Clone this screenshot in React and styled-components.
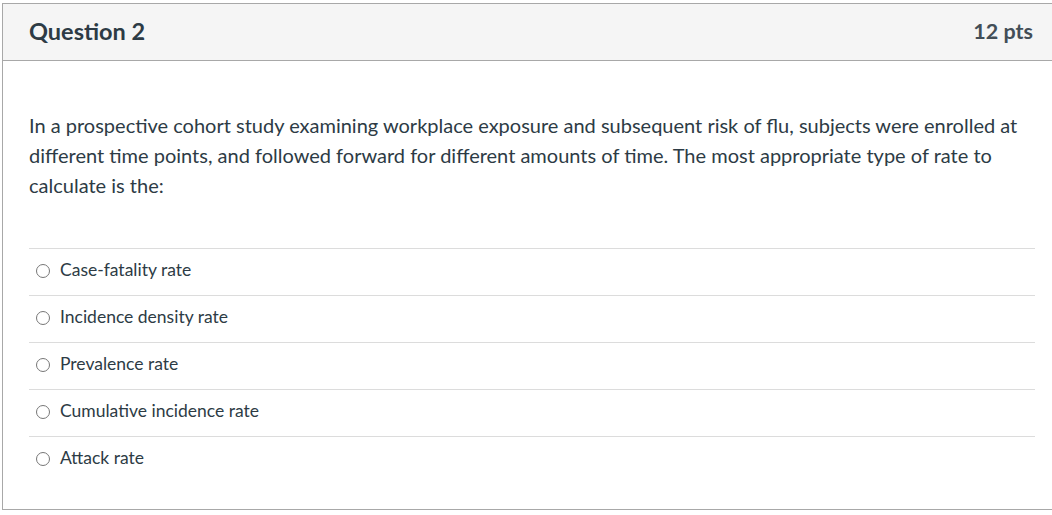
import React from 'react';
import styled, { createGlobalStyle } from 'styled-components';

const GlobalStyle = createGlobalStyle`
  html, body {
    margin: 0;
    padding: 0;
    background: #fff;
    overflow: hidden;
  }
  body {
    font-family: Lato, "Open Sans", sans-serif;
    color: #2d3b45;
  }
`;

const Page = styled.div`
  padding: 3px 0 0 2px;
`;

const QuestionBox = styled.div`
  width: 1052px;
  box-sizing: border-box;
  border: 1px solid #a8a8a8;
  background: #fff;
`;

const Header = styled.div`
  height: 56px;
  box-sizing: content-box;
  display: flex;
  align-items: center;
  justify-content: space-between;
  padding: 0 20px 0 26px;
  background: #f5f5f5;
  border-bottom: 1px solid #a8a8a8;
`;

const Title = styled.h2`
  margin: 0 0 2px;
  font-size: 23.5px;
  font-weight: 700;
  color: #2d3b45;
`;

const Points = styled.span`
  margin-bottom: 2px;
  font-size: 21.5px;
  font-weight: 700;
  color: #434e57;
`;

const Body = styled.div`
  padding: 49px 18px 26px 26px;
`;

const Prompt = styled.p`
  margin: 0 0 48px;
  font-size: 20px;
  line-height: 30px;
`;

const Answers = styled.div`
  display: flex;
  flex-direction: column;
`;

const Answer = styled.label`
  display: flex;
  align-items: center;
  gap: 10px;
  height: 47px;
  padding: 0 0 6px 7px;
  box-sizing: border-box;
  border-top: 1px solid #dcdcdc;
  font-size: 17.5px;
`;

const Radio = styled.span`
  width: 14px;
  height: 14px;
  margin-top: 4px;
  box-sizing: border-box;
  border: 1px solid #777;
  border-radius: 50%;
  background: #fff;
  flex: none;
`;

const answers = [
  'Case-fatality rate',
  'Incidence density rate',
  'Prevalence rate',
  'Cumulative incidence rate',
  'Attack rate'
];

const App = () => (
  <Page>
    <GlobalStyle />
    <QuestionBox>
      <Header>
        <Title>Question 2</Title>
        <Points>12 pts</Points>
      </Header>
      <Body>
        <Prompt>
          In a prospective cohort study examining workplace exposure and
          subsequent risk of flu, subjects were enrolled at different time
          points, and followed forward for different amounts of time. The most
          appropriate type of rate to calculate is the:
        </Prompt>
        <Answers>
          {answers.map(a => (
            <Answer key={a}>
              <Radio />
              {a}
            </Answer>
          ))}
        </Answers>
      </Body>
    </QuestionBox>
  </Page>
);

export default App;
